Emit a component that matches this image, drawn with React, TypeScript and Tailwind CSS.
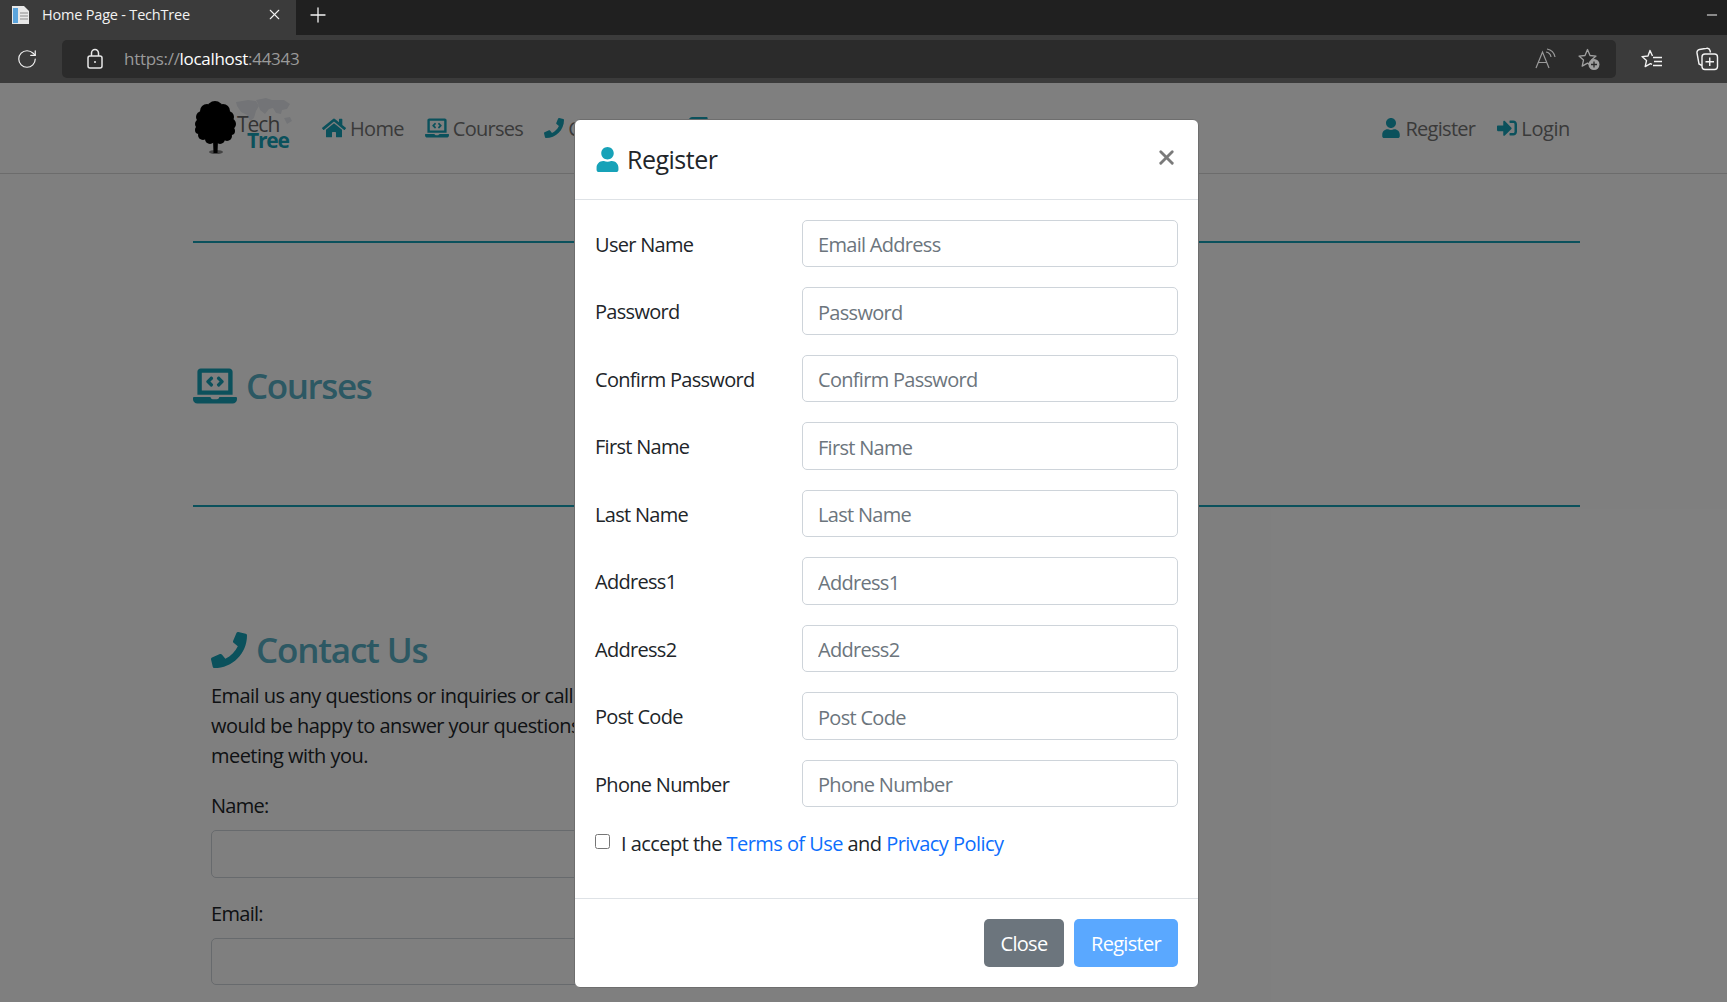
import { Minus, Plus, RotateCw, X } from 'lucide-react';
import { FaBook, FaHome, FaLaptopCode, FaPhone, FaSignInAlt, FaUser } from 'react-icons/fa';

const fields = [
  { label: 'User Name', placeholder: 'Email Address' },
  { label: 'Password', placeholder: 'Password' },
  { label: 'Confirm Password', placeholder: 'Confirm Password' },
  { label: 'First Name', placeholder: 'First Name' },
  { label: 'Last Name', placeholder: 'Last Name' },
  { label: 'Address1', placeholder: 'Address1' },
  { label: 'Address2', placeholder: 'Address2' },
  { label: 'Post Code', placeholder: 'Post Code' },
  { label: 'Phone Number', placeholder: 'Phone Number' },
];

// bumps of the tree crown in the logo
const crown = [
  [23, 13, 8], [15, 15, 7], [31, 15, 7], [10, 21, 6], [36, 21, 6], [8, 28, 5], [38, 28, 6],
  [7, 34, 4], [39, 35, 4], [11, 39, 5], [35, 40, 5], [18, 43, 5], [28, 43, 5], [23, 28, 16],
];

const TabIcon = () => (
  <svg width="22" height="22" viewBox="0 0 22 22" fill="none">
    <path d="M2 2h12l5 5v13H2z" fill="#e8e8e8" />
    <path d="M3 4h5v15H3z" fill="#5ba4dc" />
    <path d="M10 9h8M10 12h8M10 15h8" stroke="#a9a9a9" strokeWidth="1.5" />
  </svg>
);

const LockIcon = () => (
  <svg width="18" height="22" viewBox="0 0 18 22" fill="none" stroke="#e8e8e8" strokeWidth="1.5">
    <rect x="2" y="8" width="14" height="12" rx="2" />
    <path d="M5.5 8V5a3.5 3.5 0 0 1 7 0v3" />
    <circle cx="9" cy="14" r="1" fill="#e8e8e8" stroke="none" />
  </svg>
);

const ReadAloudIcon = () => (
  <svg width="22" height="22" viewBox="0 0 22 22" fill="none" stroke="#9a9a9a" strokeWidth="1.2">
    <path d="M2 20 8.5 4 15 20M4.5 14.5h8" />
    <path d="M12 4a6 6 0 0 1 5 5M13 1a10 10 0 0 1 8 8" />
  </svg>
);

const StarAddIcon = () => (
  <svg width="24" height="24" viewBox="0 0 24 24" fill="none">
    <path d="M10.5 2.5 13 8.5l6 .6-4.5 4 1.300 6-5.300-3-5.300 3 1.300-6-4.500-4 6-.6z" stroke="#a0a0a0" strokeWidth="1.3" strokeLinejoin="round" />
    <circle cx="17" cy="17.500" r="5.500" fill="#a0a0a0" />
    <path d="M17 14.500v6M14 17.500h6" stroke="#2b2b2b" strokeWidth="1.300" />
  </svg>
);

const FavoritesIcon = () => (
  <svg width="24" height="24" viewBox="0 0 24 24" fill="none" stroke="#f2f2f2" strokeWidth="1.400">
    <path d="M12.500 9 10 3.500 8 9l-6 .6 4.500 4-1.300 6 5.300-3 1.500.8" strokeLinejoin="round" />
    <path d="M13 10.500h9M14 14.500h8M13 18.500h9" />
  </svg>
);

const CollectionsIcon = () => (
  <svg width="24" height="24" viewBox="0 0 24 24" fill="none" stroke="#f2f2f2" strokeWidth="1.400">
    <path d="M7 18.500 4 17 2 6a3 3 0 0 1 2.500-3.500l7-1.200A3 3 0 0 1 15 3.500l.5 2" />
    <rect x="7" y="7" width="15.500" height="15.500" rx="3" />
    <path d="M14.750 10.500v8.500M10.500 14.750H19" />
  </svg>
);

const Logo = () => (
  <div className="relative h-[64px] w-[100px] shrink-0">
    <svg width="104" height="64" viewBox="0 0 104 64" className="absolute inset-0">
      <g fill="#e6e9ee">
        <path d="M44 6l12-2 8 1 3 5-3 5-2 7-4 3-3-6-6-3-4-6z" />
        <path d="M64 4l10-2 6 2 12 0 6 4-3 5-5 1-1 4-5-1-3-5-4 1-4 5-5-4-2-6z" />
        <path d="M92 22l6-1 2 4-5 3z" />
      </g>
      <ellipse cx="24" cy="56" rx="7" ry="2" fill="#888" />
      <g fill="#000">
        {crown.map(([cx, cy, r]) => (
          <circle key={`${cx}-${cy}`} cx={cx} cy={cy} r={r} />
        ))}
        <path d="M21 44h5l-.5 13h-4zM21 46l-5-4h2l4 3zM26 46l5-4h-2l-4 3z" />
      </g>
    </svg>
    <span className="absolute left-[45px] top-[20px] text-[21px] leading-[16px] tracking-[-1px] text-[#666]">Tech</span>
    <span className="absolute left-[55px] top-[36px] text-[21px] font-bold leading-[16px] tracking-[-1.2px] text-[#17a2b8]">Tree</span>
  </div>
);

const NavLink = ({ icon, label, className }: { icon: React.ReactNode; label: string; className?: string }) => (
  <a className={`flex items-center gap-[4px] whitespace-nowrap text-[#757575] ${className ?? ''}`}>
    <span className="text-[#17a2b8]">{icon}</span>
    <span className="pt-[2px]">{label}</span>
  </a>
);

export default function App() {
  return (
    <div className="relative flex h-[1002px] w-full flex-col overflow-hidden bg-white font-['Open_Sans',sans-serif] text-[20px] tracking-[-0.7px] text-[#212529]">
      <div className="flex h-[35px] shrink-0 bg-[#202020] pb-[6px] text-[#f2f2f2]">
        <div className="-mb-[6px] flex w-[296px] items-center bg-[#3b3b3b] pb-[6px] pl-[10px] pr-[13px]">
          <TabIcon />
          <span className="ml-[10px] flex-1 text-[14.5px] tracking-[-0.2px]">Home Page - TechTree</span>
          <X size={17} strokeWidth={1.5} />
        </div>
        <div className="flex w-[44px] items-center justify-center">
          <Plus size={24} strokeWidth={1.3} />
        </div>
        <div className="flex flex-1 items-center justify-end pr-[7px]">
          <Minus size={16} strokeWidth={1.5} />
        </div>
      </div>

      <div className="flex h-[48px] shrink-0 items-center bg-[#3b3b3b] pl-[16px] pr-[8px]">
        <RotateCw size={22} strokeWidth={1.3} className="text-[#f2f2f2]" />
        <div className="ml-[24px] flex h-[38px] flex-1 items-center rounded-[5px] bg-[#2b2b2b] pl-[24px] pr-[15px]">
          <LockIcon />
          <span className="ml-[20px] flex-1 text-[17px] tracking-[-0.3px] text-[#9a9a9a]">
            https://<span className="text-white">localhost</span>:44343
          </span>
          <ReadAloudIcon />
          <span className="ml-[21px]">
            <StarAddIcon />
          </span>
        </div>
        <span className="ml-[24px]">
          <FavoritesIcon />
        </span>
        <span className="ml-[31px]">
          <CollectionsIcon />
        </span>
      </div>

      <div className="relative min-h-0 flex-1">
        <nav className="flex h-[91px] items-center border-b border-[#d8d8d8] pl-[192px] pr-[157px]">
          <Logo />
          <div className="ml-[30px] flex items-center gap-[21px]">
            <NavLink icon={<FaHome size={24} />} label="Home" />
            <NavLink icon={<FaLaptopCode size={24} />} label="Courses" />
            <NavLink icon={<FaPhone size={20} />} label="Contact" />
            <NavLink icon={<FaBook size={22} />} label="About" className="ml-[31px]" />
          </div>
          <div className="ml-auto flex items-center gap-[22px]">
            <NavLink icon={<FaUser size={20} />} label="Register" />
            <NavLink icon={<FaSignInAlt size={20} />} label="Login" className="tracking-[-0.4px]" />
          </div>
        </nav>

        <main className="mx-[193px] mt-[67px] w-[1387px]">
          <hr className="border-t-2 border-[#17a2b8]" />
          <h2 className="mt-[119px] flex h-[48px] items-center gap-[9px] text-[35px] font-semibold tracking-[-1.4px] text-[#58b0c6]">
            <FaLaptopCode size={44} className="text-[#17a2b8]" />
            Courses
          </h2>
          <hr className="mt-[95px] border-t-2 border-[#17a2b8]" />
          <section className="mt-[121px] px-[18px]">
            <h2 className="flex h-[44px] items-center gap-[9px] text-[35px] font-semibold tracking-[-1.2px] text-[#58b0c6]">
              <FaPhone size={36} className="text-[#17a2b8]" />
              Contact Us
            </h2>
            <p className="mt-[9px] w-[440px] leading-[30px] tracking-[-0.55px]">
              Email us any questions or inquiries or call
              <br />
              would be happy to answer your questions
              <br />
              meeting with you.
            </p>
            <label className="mt-[20px] block leading-[30px]">Name:</label>
            <div className="mt-[9px] h-[47.5px] w-[500px] rounded-[5px] border border-[#ced4da] bg-white" />
            <label className="mt-[21px] block leading-[30px]">Email:</label>
            <div className="mt-[9px] h-[47.5px] w-[500px] rounded-[5px] border border-[#ced4da] bg-white" />
          </section>
        </main>

        <div className="absolute inset-0 bg-black/50" />

        <div className="absolute left-[574px] top-[36px] w-[625px] rounded-[6px] border border-[#6e6e6e] bg-white">
          <div className="flex items-start justify-between border-b border-[#dee2e6] p-[20px]">
            <h5 className="mt-[1px] flex h-[37.5px] items-center gap-[7px] text-[25px] font-normal tracking-[-0.5px]">
              <FaUser size={25} className="text-[#17a2b8]" />
              Register
            </h5>
            <button className="mt-[6px] text-[#7a7a7a]">
              <X size={23} strokeWidth={3} />
            </button>
          </div>

          <form className="p-[20px]">
            {fields.map((field) => (
              <div key={field.label} className="mb-[20px] flex h-[47.5px] items-center">
                <label className="w-[207px] shrink-0 pt-[3px]">{field.label}</label>
                <input
                  placeholder={field.placeholder}
                  className="h-full flex-1 rounded-[5px] border border-[#ced4da] px-[15px] pt-[3px] placeholder:text-[#6c757d]"
                />
              </div>
            ))}
            <div className="mb-[19px] flex h-[32px] items-center pt-[2px]">
              <input type="checkbox" className="mb-[6px] h-[15px] w-[15px]" />
              <span className="ml-[11px] tracking-[-0.55px]">
                I accept the <a className="text-[#0d6efd]">Terms of Use</a> and{' '}
                <a className="text-[#0d6efd]">Privacy Policy</a>
              </span>
            </div>
          </form>

          <div className="flex justify-end gap-[10px] border-t border-[#dee2e6] p-[20px]">
            <button className="h-[47.5px] w-[80px] rounded-[5px] bg-[#6c757d] pt-[3px] text-white">Close</button>
            <button className="h-[47.5px] w-[104px] rounded-[5px] bg-[#5aa8ff] pt-[3px] text-white">Register</button>
          </div>
        </div>
      </div>
    </div>
  );
}
